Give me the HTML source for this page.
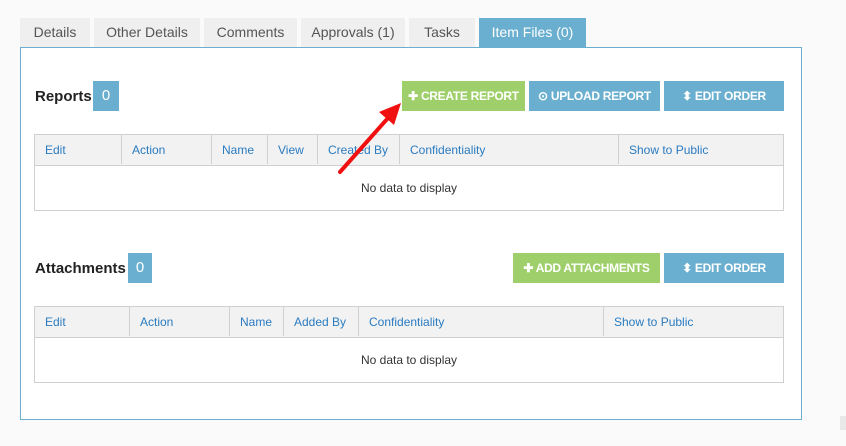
<!DOCTYPE html><html><head><style>
body{margin:0;width:846px;height:446px;background:#fafafa;position:relative;overflow:hidden;font-family:"Liberation Sans",sans-serif}
.a{position:absolute;box-sizing:border-box}
.tab{top:18px;height:29px;background:#efefef;color:#555;font-size:14px;line-height:29px;text-align:center}
.panel{left:20px;top:47px;width:782px;height:373px;border:1px solid #6aafcf;background:#fff}
.h{font-weight:bold;font-size:15px;color:#222}
.badge{background:#6aafcf;color:#fff;font-size:15px;text-align:center;line-height:30px;height:30px}
.btn{height:30px;color:#fff;font-size:12px;font-weight:bold;line-height:30px;text-align:center;letter-spacing:-0.3px}
.g{background:#9fcf6a}.b{background:#6aafcf}
.tbl{border:1px solid #d0d0d0;background:#fff}
.th{background:#f2f2f2;height:30px;border-bottom:1px solid #d0d0d0;position:relative}
.th span{position:absolute;top:0;height:29px;line-height:30px;font-size:12px;color:#2a7bc0;padding-left:10px;border-left:1px solid #d0d0d0;box-sizing:border-box}
.nd{text-align:center;font-size:12px;color:#333;line-height:44px}
</style></head><body>
<div class="a tab" style="left:20px;width:70px">Details</div>
<div class="a tab" style="left:94px;width:106px">Other Details</div>
<div class="a tab" style="left:204px;width:93px">Comments</div>
<div class="a tab" style="left:301px;width:104px">Approvals (1)</div>
<div class="a tab" style="left:409px;width:66px">Tasks</div>
<div class="a tab" style="left:479px;width:107px;background:#6aafcf;color:#fff">Item Files (0)</div>
<div class="a panel"></div>
<div class="a h" style="left:35px;top:88px">Reports</div>
<div class="a badge" style="left:93px;top:81px;width:26px">0</div>
<div class="a btn g" style="left:402px;top:81px;width:123px">✚ CREATE REPORT</div>
<div class="a btn b" style="left:529px;top:81px;width:131px">⊙ UPLOAD REPORT</div>
<div class="a btn b" style="left:664px;top:81px;width:120px">⬍ EDIT ORDER</div>
<div class="a tbl" style="left:34px;top:134px;width:750px;height:77px">
<div class="th"><span style="left:0;width:87px;border-left:0">Edit</span><span style="left:86px;width:90px">Action</span><span style="left:176px;width:56px">Name</span><span style="left:232px;width:50px">View</span><span style="left:282px;width:82px">Created By</span><span style="left:364px;width:219px">Confidentiality</span><span style="left:583px;width:165px">Show to Public</span></div>
<div class="nd">No data to display</div></div>
<div class="a h" style="left:35px;top:260px">Attachments</div>
<div class="a badge" style="left:128px;top:253px;width:24px">0</div>
<div class="a btn g" style="left:513px;top:253px;width:147px">✚ ADD ATTACHMENTS</div>
<div class="a btn b" style="left:664px;top:253px;width:120px">⬍ EDIT ORDER</div>
<div class="a tbl" style="left:34px;top:306px;width:750px;height:77px">
<div class="th"><span style="left:0;width:95px;border-left:0">Edit</span><span style="left:94px;width:100px">Action</span><span style="left:194px;width:54px">Name</span><span style="left:248px;width:75px">Added By</span><span style="left:323px;width:245px">Confidentiality</span><span style="left:568px;width:180px">Show to Public</span></div>
<div class="nd">No data to display</div></div>
<svg class="a" style="left:0;top:0" width="846" height="446"><line x1="340" y1="172" x2="388" y2="118" stroke="#f01010" stroke-width="4" stroke-linecap="round"/><polygon points="401,103 379,112 394,125" fill="#f01010"/></svg>
<div class="a" style="left:840px;top:416px;width:6px;height:14px;background:#e8e8e8"></div>
</body></html>
